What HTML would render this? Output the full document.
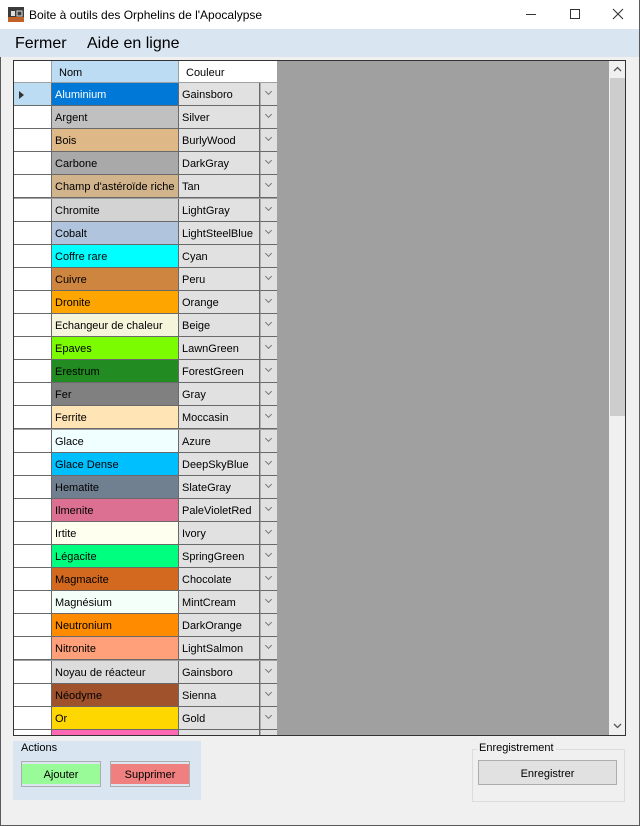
<!DOCTYPE html>
<html><head><meta charset="utf-8"><style>
*{margin:0;padding:0;box-sizing:border-box}
body{width:640px;height:826px;background:#f0f0f0;font-family:"Liberation Sans","DejaVu Sans",sans-serif;font-size:11px;color:#000;position:relative;overflow:hidden}
.win{position:absolute;left:0;top:0;width:640px;height:826px;border:1px solid #5a5a5a;border-top:none}
.title{position:absolute;left:0;top:0;width:639px;height:29px;background:#fff}
.title .t{position:absolute;left:29px;top:8px;font-size:12px}
.menu{position:absolute;left:0;top:29px;width:639px;height:28px;background:#d9e5f1;font-size:16px}
.menu span{position:absolute;top:6px}
.grid{position:absolute;left:13px;top:60px;width:613px;height:676px;border:1px solid #333;background:#a0a0a0;overflow:hidden}
.row{position:absolute;left:0;height:23px;width:263px;background:#696969}
.row div{position:absolute;top:0;height:22px;line-height:24px;white-space:nowrap;overflow:hidden}
.rh{left:0;width:37px;background:#fff}
.nm{left:38px;width:126px;padding-left:3px}
.cl{left:165px;width:80px;background:#e1e1e1;padding-left:3px}
.ar{left:246px;width:17px;background:#e1e1e1;border-left:1px solid #b0b0b0}
.ar:after{content:"";position:absolute;left:5px;top:6px;width:4px;height:4px;border-right:1px solid #777;border-bottom:1px solid #777;transform:rotate(45deg)}
.sb{position:absolute;left:595px;top:0;width:17px;height:674px;background:#f0f0f0}
.thumb{position:absolute;left:1px;top:17px;width:15px;height:338px;background:#cdcdcd}
.btn{position:absolute;border:1px solid #adadad;text-align:center;font-size:11px}
</style></head><body>
<div class="win"></div>
<div class="title">
<svg style="position:absolute;left:8px;top:7px" width="16" height="15"><rect width="16" height="15" fill="#3a3a3a"/><rect y="10" width="16" height="5" fill="#c0602a"/><rect x="3" y="4" width="4" height="5" fill="#ddd"/><rect x="9" y="4" width="5" height="5" fill="none" stroke="#ddd"/></svg>
<span class="t">Boite à outils des Orphelins de l'Apocalypse</span>
<div style="position:absolute;left:526px;top:14px;width:10px;height:1px;background:#333"></div>
<div style="position:absolute;left:570px;top:9px;width:10px;height:10px;border:1px solid #333"></div>
<svg style="position:absolute;left:612px;top:8px" width="12" height="12"><path d="M1 1L11 11M11 1L1 11" stroke="#333" stroke-width="1.1"/></svg>
</div>
<div class="menu"><span style="left:15px">Fermer</span><span style="left:87px">Aide en ligne</span></div>
<div class="grid">
<div class="row" style="top:0;height:22px;background:#a0a0a0"><div class="rh" style="height:21px"></div><div class="nm" style="background:#bcdcf4;padding-left:7px;height:21px;line-height:24px">Nom</div><div style="left:165px;width:98px;background:#fff;padding-left:7px;height:21px;line-height:24px">Couleur</div></div>
<div class="row" style="top:22px"><div class="rh" style="background:#bcdcf4"><span style="position:absolute;left:5px;top:8px;border-left:5px solid #333;border-top:4px solid transparent;border-bottom:4px solid transparent"></span></div><div class="nm" style="background:#0078d7;color:#fff">Aluminium</div><div class="cl">Gainsboro</div><div class="ar"></div></div>
<div class="row" style="top:45px"><div class="rh"></div><div class="nm" style="background:#c0c0c0">Argent</div><div class="cl">Silver</div><div class="ar"></div></div>
<div class="row" style="top:68px"><div class="rh"></div><div class="nm" style="background:#deb887">Bois</div><div class="cl">BurlyWood</div><div class="ar"></div></div>
<div class="row" style="top:91px"><div class="rh"></div><div class="nm" style="background:#a9a9a9">Carbone</div><div class="cl">DarkGray</div><div class="ar"></div></div>
<div class="row" style="top:114px"><div class="rh"></div><div class="nm" style="background:#d2b48c">Champ d'astéroïde riche</div><div class="cl">Tan</div><div class="ar"></div></div>
<div class="row" style="top:138px"><div class="rh"></div><div class="nm" style="background:#d3d3d3">Chromite</div><div class="cl">LightGray</div><div class="ar"></div></div>
<div class="row" style="top:161px"><div class="rh"></div><div class="nm" style="background:#b0c4de">Cobalt</div><div class="cl">LightSteelBlue</div><div class="ar"></div></div>
<div class="row" style="top:184px"><div class="rh"></div><div class="nm" style="background:#00ffff">Coffre rare</div><div class="cl">Cyan</div><div class="ar"></div></div>
<div class="row" style="top:207px"><div class="rh"></div><div class="nm" style="background:#cd853f">Cuivre</div><div class="cl">Peru</div><div class="ar"></div></div>
<div class="row" style="top:230px"><div class="rh"></div><div class="nm" style="background:#ffa500">Dronite</div><div class="cl">Orange</div><div class="ar"></div></div>
<div class="row" style="top:253px"><div class="rh"></div><div class="nm" style="background:#f5f5dc">Echangeur de chaleur</div><div class="cl">Beige</div><div class="ar"></div></div>
<div class="row" style="top:276px"><div class="rh"></div><div class="nm" style="background:#7cfc00">Epaves</div><div class="cl">LawnGreen</div><div class="ar"></div></div>
<div class="row" style="top:299px"><div class="rh"></div><div class="nm" style="background:#228b22">Erestrum</div><div class="cl">ForestGreen</div><div class="ar"></div></div>
<div class="row" style="top:322px"><div class="rh"></div><div class="nm" style="background:#808080">Fer</div><div class="cl">Gray</div><div class="ar"></div></div>
<div class="row" style="top:345px"><div class="rh"></div><div class="nm" style="background:#ffe4b5">Ferrite</div><div class="cl">Moccasin</div><div class="ar"></div></div>
<div class="row" style="top:369px"><div class="rh"></div><div class="nm" style="background:#f0ffff">Glace</div><div class="cl">Azure</div><div class="ar"></div></div>
<div class="row" style="top:392px"><div class="rh"></div><div class="nm" style="background:#00bfff">Glace Dense</div><div class="cl">DeepSkyBlue</div><div class="ar"></div></div>
<div class="row" style="top:415px"><div class="rh"></div><div class="nm" style="background:#708090">Hematite</div><div class="cl">SlateGray</div><div class="ar"></div></div>
<div class="row" style="top:438px"><div class="rh"></div><div class="nm" style="background:#db7093">Ilmenite</div><div class="cl">PaleVioletRed</div><div class="ar"></div></div>
<div class="row" style="top:461px"><div class="rh"></div><div class="nm" style="background:#fffff0">Irtite</div><div class="cl">Ivory</div><div class="ar"></div></div>
<div class="row" style="top:484px"><div class="rh"></div><div class="nm" style="background:#00ff7f">Légacite</div><div class="cl">SpringGreen</div><div class="ar"></div></div>
<div class="row" style="top:507px"><div class="rh"></div><div class="nm" style="background:#d2691e">Magmacite</div><div class="cl">Chocolate</div><div class="ar"></div></div>
<div class="row" style="top:530px"><div class="rh"></div><div class="nm" style="background:#f5fffa">Magnésium</div><div class="cl">MintCream</div><div class="ar"></div></div>
<div class="row" style="top:553px"><div class="rh"></div><div class="nm" style="background:#ff8c00">Neutronium</div><div class="cl">DarkOrange</div><div class="ar"></div></div>
<div class="row" style="top:576px"><div class="rh"></div><div class="nm" style="background:#ffa07a">Nitronite</div><div class="cl">LightSalmon</div><div class="ar"></div></div>
<div class="row" style="top:600px"><div class="rh"></div><div class="nm" style="background:#dcdcdc">Noyau de réacteur</div><div class="cl">Gainsboro</div><div class="ar"></div></div>
<div class="row" style="top:623px"><div class="rh"></div><div class="nm" style="background:#a0522d">Néodyme</div><div class="cl">Sienna</div><div class="ar"></div></div>
<div class="row" style="top:646px"><div class="rh"></div><div class="nm" style="background:#ffd700">Or</div><div class="cl">Gold</div><div class="ar"></div></div>
<div class="row" style="top:669px"><div class="rh"></div><div class="nm" style="background:#ff69b4"></div><div class="cl"></div><div class="ar"></div></div>
<div class="sb"><div class="thumb"></div>
<svg style="position:absolute;left:4px;top:5px" width="9" height="6"><path d="M1 5L4.5 1.5L8 5" stroke="#555" fill="none" stroke-width="1.3"/></svg>
<svg style="position:absolute;left:4px;top:662px" width="9" height="6"><path d="M1 1L4.5 4.5L8 1" stroke="#555" fill="none" stroke-width="1.3"/></svg>
</div>
</div>
<div style="position:absolute;left:13px;top:741px;width:188px;height:59px;background:#d9e5f1"></div>
<div style="position:absolute;left:21px;top:742px;font-size:11px">Actions</div>
<div class="btn" style="left:21px;top:761px;width:80px;height:26px;padding-top:2px"><div style="background:#98fb98;height:20px;line-height:22px">Ajouter</div></div>
<div class="btn" style="left:110px;top:761px;width:80px;height:26px;padding-top:2px"><div style="background:#f08080;height:20px;line-height:22px">Supprimer</div></div>
<div style="position:absolute;left:472px;top:749px;width:153px;height:53px;border:1px solid #dcdcdc"></div>
<div style="position:absolute;left:477px;top:742px;background:#f0f0f0;padding:0 2px">Enregistrement</div>
<div class="btn" style="left:478px;top:760px;width:139px;height:25px;line-height:26px;background:#e1e1e1">Enregistrer</div>
</body></html>
